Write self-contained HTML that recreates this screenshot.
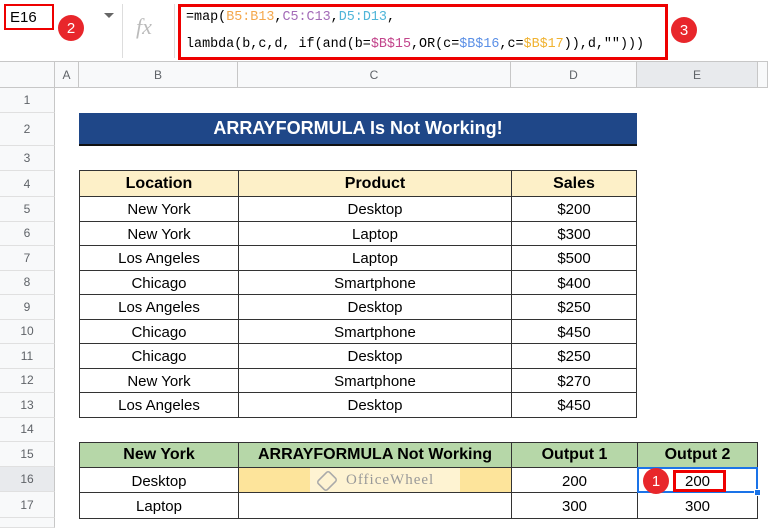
<!DOCTYPE html>
<html><head><meta charset="utf-8"><style>
*{box-sizing:border-box;margin:0;padding:0}
body{width:768px;height:526px;overflow:hidden;background:#fff;font-family:"Liberation Sans",Arial,sans-serif;position:relative}
.a{position:absolute}
.rn{position:absolute;left:0;width:55px;background:#f8f9fa;border-bottom:1px solid #e0e0e0;border-right:1px solid #c7c7c7;color:#5f6368;font-size:12px;display:flex;align-items:center;justify-content:center}
.ch{position:absolute;top:62px;height:26px;background:#f8f9fa;border-right:1px solid #c7c7c7;border-bottom:1px solid #c7c7c7;color:#5f6368;font-size:12px;display:flex;align-items:center;justify-content:center}
table{position:absolute;border-collapse:collapse;font-size:15px;color:#000}
td{border:1px solid #333;text-align:center;padding:2px 0 0 0;height:24.5px}
th{border:1px solid #333;font-weight:bold;font-size:16px;padding:0}
.badge{position:absolute;width:26px;height:26px;border-radius:50%;background:#e8262b;color:#fff;font-size:15px;display:flex;align-items:center;justify-content:center}
.mono{font-family:"Liberation Mono",monospace;font-size:13.4px;color:#000;position:absolute;left:186px;white-space:pre}
</style></head><body>
<div class="a" style="left:0;top:0;width:768px;height:62px;background:#fff;border-bottom:1px solid #c7c7c7"></div>
<div class="a" style="left:4px;top:4px;width:50px;height:26px;border:2px solid #e00;font-size:15px;padding:3px 4px">E16</div>
<div class="badge" style="left:58px;top:15px">2</div>
<div class="a" style="left:104px;top:13px;width:0;height:0;border-left:5px solid transparent;border-right:5px solid transparent;border-top:5px solid #666"></div>
<div class="a" style="left:122px;top:4px;width:1px;height:54px;background:#ddd"></div>
<div class="a" style="left:136px;top:14px;font-family:'Liberation Serif',serif;font-style:italic;font-size:22px;color:#bbb">fx</div>
<div class="a" style="left:174px;top:4px;width:1px;height:54px;background:#ddd"></div>
<div class="a" style="left:178px;top:4px;width:490px;height:56px;border:3px solid #e00"></div>
<div class="mono" style="top:10px">=map(<span style="color:#f4a74b">B5:B13</span>,<span style="color:#a36bb8">C5:C13</span>,<span style="color:#4fb5d8">D5:D13</span>,</div>
<div class="mono" style="top:37px">lambda(b,c,d, if(and(b=<span style="color:#c2448b">$B$15</span>,OR(c=<span style="color:#5a8fe6">$B$16</span>,c=<span style="color:#f0b230">$B$17</span>)),d,"")))</div>
<div class="badge" style="left:671px;top:17px">3</div>

<div class="ch" style="left:0;width:55px"></div>
<div class="ch" style="left:55px;width:24px">A</div>
<div class="ch" style="left:79px;width:159px">B</div>
<div class="ch" style="left:238px;width:273px">C</div>
<div class="ch" style="left:511px;width:126px">D</div>
<div class="ch" style="left:637px;width:121px;background:#e8eaed">E</div>
<div class="ch" style="left:758px;width:10px"></div>

<div class="rn" style="top:88px;height:25px">1</div>
<div class="rn" style="top:113px;height:33px">2</div>
<div class="rn" style="top:146px;height:25px">3</div>
<div class="rn" style="top:171px;height:26px">4</div>
<div class="rn" style="top:197px;height:24.5px">5</div>
<div class="rn" style="top:221.5px;height:24.5px">6</div>
<div class="rn" style="top:246px;height:24.5px">7</div>
<div class="rn" style="top:270.5px;height:24.5px">8</div>
<div class="rn" style="top:295px;height:24.5px">9</div>
<div class="rn" style="top:319.5px;height:24.5px">10</div>
<div class="rn" style="top:344px;height:24.5px">11</div>
<div class="rn" style="top:368.5px;height:24.5px">12</div>
<div class="rn" style="top:393px;height:24.5px">13</div>
<div class="rn" style="top:417.5px;height:24.5px">14</div>
<div class="rn" style="top:442px;height:25px">15</div>
<div class="rn" style="top:467px;height:25px;background:#e8eaed">16</div>
<div class="rn" style="top:492px;height:26px">17</div>
<div class="rn" style="top:518px;height:10px"></div>

<div class="a" style="left:79px;top:113px;width:558px;height:33px;background:#1f4788;border-bottom:2px solid #111;color:#fff;font-weight:bold;font-size:18px;display:flex;align-items:center;justify-content:center">ARRAYFORMULA Is Not Working!</div>

<table style="left:79px;top:170px;width:558px">
<tr style="background:#fdf0c8;height:26px"><th style="width:159px">Location</th><th style="width:273px">Product</th><th>Sales</th></tr>
<tr><td>New York</td><td>Desktop</td><td>$200</td></tr>
<tr><td>New York</td><td>Laptop</td><td>$300</td></tr>
<tr><td>Los Angeles</td><td>Laptop</td><td>$500</td></tr>
<tr><td>Chicago</td><td>Smartphone</td><td>$400</td></tr>
<tr><td>Los Angeles</td><td>Desktop</td><td>$250</td></tr>
<tr><td>Chicago</td><td>Smartphone</td><td>$450</td></tr>
<tr><td>Chicago</td><td>Desktop</td><td>$250</td></tr>
<tr><td>New York</td><td>Smartphone</td><td>$270</td></tr>
<tr><td>Los Angeles</td><td>Desktop</td><td>$450</td></tr>
</table>

<table style="left:79px;top:442px;width:679px">
<tr style="background:#b6d7a8;height:25px"><th style="width:159px">New York</th><th style="width:273px">ARRAYFORMULA Not Working</th><th style="width:126px">Output 1</th><th>Output 2</th></tr>
<tr style="height:25px"><td>Desktop</td><td style="background:#fde49b"></td><td>200</td><td>200</td></tr>
<tr style="height:26px"><td>Laptop</td><td></td><td>300</td><td>300</td></tr>
</table>
<div class="a" style="left:310px;top:468px;width:150px;height:24px;background:rgba(255,255,255,0.55);color:#999;font-family:'Liberation Serif',serif;font-size:15px;letter-spacing:1px;padding:4px 0 0 36px">OfficeWheel</div>
<div class="a" style="left:318px;top:470px;width:18px;height:22px;border:2px solid #aaa;border-radius:4px;transform:rotate(45deg) scale(.8)"></div>
<div class="a" style="left:637px;top:467px;width:121px;height:26px;border:2px solid #1a73e8"></div>
<div class="a" style="left:754px;top:489px;width:7px;height:7px;background:#1a73e8;border:1px solid #fff"></div>
<div class="a" style="left:673px;top:470px;width:53px;height:22px;border:3px solid #e00"></div>
<div class="badge" style="left:643px;top:468px">1</div>
</body></html>
